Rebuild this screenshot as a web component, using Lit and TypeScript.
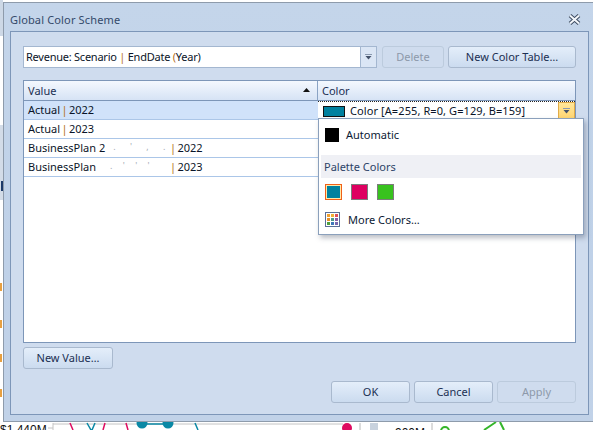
import { LitElement, html, css, svg } from "lit";
import { customElement } from "lit/decorators.js";

const arrow = html`<svg class="arr" width="9" height="6" viewBox="0 0 9 6"><path d="M1 0.5h7" stroke="#8a9ab0" stroke-width="1"/><path d="M1.5 2h6L4.5 5.5z" fill="#44526a"/></svg>`;

const gridColors = ["#f0a030", "#f2b035", "#e0505a", "#e8902a", "#4f9a8a", "#8a5fa8", "#4fa040", "#3f78b8", "#7a68b0"];

@customElement("app-root")
export class AppRoot extends LitElement {
  static styles = css`
    :host { display: block; position: relative; width: 593px; height: 430px; overflow: hidden; background: #fff;
      font-family: "Noto Sans", "Open Sans", sans-serif; font-size: 11px; color: #0c1a34; }
    .desk { position: absolute; inset: 0; }
    .desk-text { position: absolute; font-family: "Liberation Sans", sans-serif; font-size: 12px; color: #111; line-height: 14px; white-space: nowrap; }
    .d1 { left: 0; top: 423px; }
    .d2 { left: 395px; top: 426px; }
    .window { position: absolute; left: 3px; top: 2px; width: 595px; height: 420px; box-sizing: border-box;
      border: 1px solid #8e9bab; border-right: 0; background: linear-gradient(#c4d5ea, #bfd1e8 60%, #c1d2e8);
      display: flex; flex-direction: column; padding: 0 9px 6px 6px; }
    .title { height: 28px; flex: none; display: flex; align-items: center; justify-content: space-between; font-size: 11px; letter-spacing: .15px; color: #34496a; padding: 5px 8px 0 0; box-sizing: border-box; }
    .title svg { margin-top: -1px; }
    .panel { flex: 1; width: 579px; box-sizing: border-box; border: 1px solid #7d96b8; background: #cfdcee; padding: 14px 12px 11px; display: flex; flex-direction: column; }
    .top { display: flex; height: 22px; flex: none; }
    .combo { width: 354px; box-sizing: border-box; border: 1px solid #a4b7d0; background: #fff; display: flex; align-items: center; padding-left: 2px; color: #0a1428; }
    .combo .txt { flex: 1; letter-spacing: -.24px; padding-bottom: 1px; }
    .combo .btn { width: 15px; height: 20px; border-left: 1px solid #a4b7d0; background: #dbe6f5; display: flex; align-items: center; justify-content: center; }
    .or { color: #b5701c; }
    button { font: inherit; box-sizing: border-box; height: 22px; border: 1px solid #a9b9ce; border-radius: 3px; background: linear-gradient(#e4eefa, #cbdbef); color: #1b2f52; padding: 0 0 2px; }
    button.off { background: #cfdcee; border-color: #bccbdd; color: #8d99aa; }
    .del { width: 62px; margin-left: 5px; }
    .newt { width: 128px; margin-left: 4px; }
    .table { flex: 1; margin-top: 12px; border: 1px solid #7d96b8; background: #fff; position: relative; }
    .head { display: flex; height: 20px; box-sizing: border-box; border-bottom: 1px solid #7d96b8; background: linear-gradient(#f4f8fe, #d6e3f5); color: #1b2f52; }
    .hc { display: flex; align-items: center; padding: 0 0 1px 4px; box-sizing: border-box; justify-content: space-between; }
    .c1 { width: 294px; border-right: 1px solid #8aa3c4; padding-right: 7px; }
    .row { display: flex; height: 19px; box-sizing: border-box; border-bottom: 1px solid #abc6e8; align-items: center; padding: 0 0 1px 4px; color: #0a1428; white-space: pre; word-spacing: -1.5px; }
    .row.sel { background: #d0e2fa; }
    .name { width: 142px; display: flex; word-spacing: 0; }
    .frag { color: #a6acb6; font-size: 9px; }
    .f1 { margin-left: 8px; letter-spacing: 6px; }
    .f2 { margin-left: 14px; letter-spacing: 4px; }
    .editor { position: absolute; left: 294px; top: 20px; right: 0; height: 19px; box-sizing: border-box; background: #fff; border-top: 1px dotted #222; display: flex; align-items: center; color: #0a1428; }
    .ed-sw { width: 20px; height: 9px; background: #00819f; border: 1px solid #111; margin: 0 5px 0 5px; flex: none; }
    .ed-txt { flex: 1; white-space: nowrap; letter-spacing: .09px; padding-bottom: 1px; }
    .ed-btn { width: 17px; height: 18px; box-sizing: border-box; border: 1px solid #e2ac48; background: linear-gradient(#ffe79a, #ffd470); display: flex; align-items: center; justify-content: center; }
    .pop { position: absolute; left: 294px; top: 37px; width: 266px; height: 117px; box-sizing: border-box; background: #fff; border: 1px solid #8ba0bc; box-shadow: 2px 3px 5px rgba(60,70,90,.35); padding: 2px; display: flex; flex-direction: column; color: #0c1a34; }
    .auto { display: flex; align-items: center; height: 28px; flex: none; padding: 0 4px; gap: 7px; }
    .auto span:last-child { padding-bottom: 2px; }
    .blk { width: 14px; height: 14px; background: #000; flex: none; }
    .ph { height: 23px; flex: none; margin-top: 6px; background: #eff0f5; display: flex; align-items: center; padding: 0 0 1px 3px; box-sizing: border-box; color: #2d4468; }
    .pal { display: flex; gap: 9px; padding: 6px 4px 0; flex: none; }
    .sw { width: 17px; height: 16px; box-sizing: border-box; border: 1px solid #7c7c7c; }
    .sw.on { border: 1px solid #f06018; box-shadow: inset 0 0 0 1px #ffe9a8; }
    .more { display: flex; align-items: center; gap: 8px; padding: 12px 4px 0; }
    .bottom { flex: none; margin-top: 4px; }
    .nv { width: 90px; }
    .acts { flex: none; display: flex; justify-content: flex-end; gap: 4px; margin-top: 12px; }
    .acts button { width: 79px; }
  `;

  render() {
    return html`
      <div class="desk">
        <svg width="593" height="430" style="position:absolute;left:0;top:0">
          ${svg`
            <rect x="0" y="0" width="3" height="36" fill="#cdd8e6"/>
            <rect x="0" y="125" width="3" height="75" fill="#d3dce8"/>
            <path d="M2 181v10" stroke="#1c3a6a" stroke-width="2"/>
            <path d="M1 283v8M1 320v8M1 354v8M1 389v8" stroke="#e8a040" stroke-width="2"/>
            <path d="M48 428h5M53 423v7M53 424h290" stroke="#c4c4c4" fill="none"/>
            <path d="M70 423l3 7M105 423l-2 7M126 423l2 7" stroke="#de0b60" stroke-width="1.5" fill="none"/>
            <path d="M87 423l4 7M95 423l-3 7M195 423l3 7M143 424h25" stroke="#0a88a5" stroke-width="1.5" fill="none"/>
            <circle cx="142" cy="423" r="5.5" fill="#0a88a5"/><circle cx="168" cy="423" r="5.5" fill="#0a88a5"/>
            <circle cx="347" cy="428" r="5" fill="#de0b60"/>
            <path d="M360 423v7M432 423v7" stroke="#b8b8b8"/>
            <rect x="370" y="423" width="8" height="7" fill="#c8d2de"/>
            <circle cx="445" cy="431" r="4" fill="none" stroke="#35b52a" stroke-width="2"/>
            <path d="M484 430l12-8M500 422l4 8" stroke="#35b52a" stroke-width="2" fill="none"/>
          `}
        </svg>
        <span class="desk-text d1">$1,440M</span>
        <span class="desk-text d2">900M</span>
      </div>
      <div class="window">
        <div class="title">
          <span>Global Color Scheme</span>
          <svg width="13" height="11" viewBox="0 0 13 11"><path d="M2 1.5l9 8M11 1.5l-9 8" stroke="#3c4a60" stroke-width="3.8" fill="none"/><path d="M2 1.5l9 8M11 1.5l-9 8" stroke="#f4f7fb" stroke-width="2" fill="none"/></svg>
        </div>
        <div class="panel">
          <div class="top">
            <div class="combo"><span class="txt">Revenue: Scenario <span class="or">|</span> EndDate <span class="or">(</span>Year)</span><span class="btn">${arrow}</span></div>
            <button class="off del">Delete</button>
            <button class="newt">New Color Table…</button>
          </div>
          <div class="table">
            <div class="head">
              <div class="hc c1"><span>Value</span><svg width="7" height="4" viewBox="0 0 7 4"><path d="M0 4h7L3.5 0z" fill="#111"/></svg></div>
              <div class="hc"><span>Color</span></div>
            </div>
            <div class="row sel">Actual <span class="or">|</span> 2022</div>
            <div class="row">Actual <span class="or">|</span> 2023</div>
            <div class="row"><span class="name">BusinessPlan 2<span class="frag f1">. ' , .</span></span><span class="or">|</span> 2022</div>
            <div class="row"><span class="name">BusinessPlan<span class="frag f2">. ' ' '</span></span><span class="or">|</span> 2023</div>
            <div class="editor">
              <span class="ed-sw"></span>
              <span class="ed-txt">Color [A=255, R=0, G=129, B=159]</span>
              <span class="ed-btn">${arrow}</span>
            </div>
            <div class="pop">
              <div class="auto"><span class="blk"></span><span>Automatic</span></div>
              <div class="ph">Palette Colors</div>
              <div class="pal">
                <span class="sw on" style="background:#00819f"></span>
                <span class="sw" style="background:#de0060"></span>
                <span class="sw" style="background:#38c21e"></span>
              </div>
              <div class="more">
                <svg width="15" height="15" viewBox="0 0 15 15"><rect x=".5" y=".5" width="14" height="14" fill="#fff" stroke="#5a6f98"/>
                  ${gridColors.map((c, i) => svg`<rect x="${2 + (i % 3) * 4}" y="${2 + Math.floor(i / 3) * 4}" width="3" height="3" fill="${c}"/>`)}
                </svg>
                <span>More Colors…</span>
              </div>
            </div>
          </div>
          <div class="bottom"><button class="nv">New Value…</button></div>
          <div class="acts">
            <button>OK</button>
            <button>Cancel</button>
            <button class="off">Apply</button>
          </div>
        </div>
      </div>
    `;
  }
}
